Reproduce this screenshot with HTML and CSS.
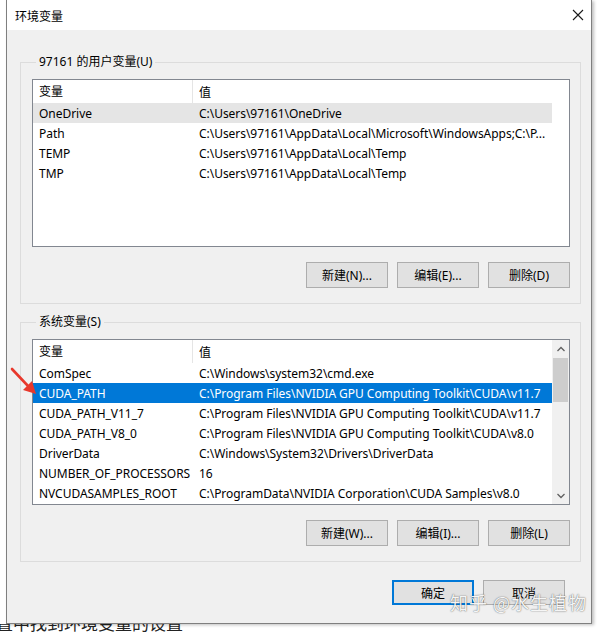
FILE: index.html
```html
<!DOCTYPE html>
<html lang="zh-CN">
<head>
<meta charset="utf-8">
<title>环境变量</title>
<link rel="stylesheet" href="styles.css">
</head>
<body>
<div class="page">
  <div class="window">
    <div class="titlebar">
      <span class="title">环境变量</span>
      <svg class="close" width="12" height="12" viewBox="0 0 12 12"><path d="M1 1L11 11M11 1L1 11" stroke="#1a1a1a" stroke-width="1.1" fill="none"/></svg>
    </div>
    <div class="content">
      <fieldset class="group group-user">
        <legend>97161 的用户变量(U)</legend>
        <div class="listview">
          <div class="row header"><span class="c1">变量</span><span class="c2">值</span></div>
          <div class="row sel-gray"><span class="c1">OneDrive</span><span class="c2">C:\Users\97161\OneDrive</span></div>
          <div class="row"><span class="c1">Path</span><span class="c2">C:\Users\97161\AppData\Local\Microsoft\WindowsApps;C:\P...</span></div>
          <div class="row"><span class="c1">TEMP</span><span class="c2">C:\Users\97161\AppData\Local\Temp</span></div>
          <div class="row"><span class="c1">TMP</span><span class="c2">C:\Users\97161\AppData\Local\Temp</span></div>
        </div>
        <div class="btnrow">
          <button class="btn">新建(N)...</button>
          <button class="btn">编辑(E)...</button>
          <button class="btn">删除(D)</button>
        </div>
      </fieldset>
      <fieldset class="group group-sys">
        <legend>系统变量(S)</legend>
        <div class="listview lv2">
          <div class="rows">
            <div class="row header"><span class="c1">变量</span><span class="c2">值</span></div>
            <div class="row"><span class="c1">ComSpec</span><span class="c2">C:\Windows\system32\cmd.exe</span></div>
            <div class="row sel-blue"><span class="c1">CUDA_PATH</span><span class="c2">C:\Program Files\NVIDIA GPU Computing Toolkit\CUDA\v11.7</span></div>
            <div class="row"><span class="c1">CUDA_PATH_V11_7</span><span class="c2">C:\Program Files\NVIDIA GPU Computing Toolkit\CUDA\v11.7</span></div>
            <div class="row"><span class="c1">CUDA_PATH_V8_0</span><span class="c2">C:\Program Files\NVIDIA GPU Computing Toolkit\CUDA\v8.0</span></div>
            <div class="row"><span class="c1">DriverData</span><span class="c2">C:\Windows\System32\Drivers\DriverData</span></div>
            <div class="row"><span class="c1">NUMBER_OF_PROCESSORS</span><span class="c2">16</span></div>
            <div class="row"><span class="c1">NVCUDASAMPLES_ROOT</span><span class="c2">C:\ProgramData\NVIDIA Corporation\CUDA Samples\v8.0</span></div>
          </div>
          <div class="scrollbar">
            <svg class="arrow" width="16" height="16" viewBox="0 0 16 16"><path d="M4.5 10L8 6.5L11.5 10" stroke="#606060" stroke-width="1.3" fill="none"/></svg>
            <div class="track"><div class="thumb"></div></div>
            <svg class="arrow" width="16" height="16" viewBox="0 0 16 16"><path d="M4.5 6L8 9.5L11.5 6" stroke="#606060" stroke-width="1.3" fill="none"/></svg>
          </div>
        </div>
        <div class="btnrow">
          <button class="btn">新建(W)...</button>
          <button class="btn">编辑(I)...</button>
          <button class="btn">删除(L)</button>
        </div>
      </fieldset>
      <div class="footer">
        <button class="btn default">确定</button>
        <button class="btn">取消</button>
      </div>
    </div>
    <div class="watermark">知乎 @水生植物</div>
  </div>
  <div class="below"><span>置中找到环境变量的设置</span></div>
  <svg class="redarrow" width="30" height="32" viewBox="0 0 30 32"><path d="M2 3L18 20" stroke="#e8382c" stroke-width="2.6" fill="none" stroke-linecap="round"/><path d="M26 28L13 24L22 15Z" fill="#e8382c"/></svg>
</div>
</body>
</html>
```

FILE: styles.css
```css
* { box-sizing: border-box; }
html, body { margin: 0; padding: 0; background: #ffffff; }
body {
  font-family: "Noto Sans", "Noto Sans CJK SC", sans-serif;
  font-size: 12px;
  color: #000;
}
.page {
  position: relative;
  width: 600px;
  height: 632px;
  overflow: hidden;
}
.window {
  position: relative;
  margin-left: 6px;
  width: 586px;
  height: 624px;
  border-left: 1px solid #7f7f7f;
  border-right: 1px solid #7f7f7f;
  border-bottom: 1px solid #7f7f7f;
  box-shadow: 2px 1px 3px rgba(0,0,0,0.25);
  background: #f0f0f0;
  display: flex;
  flex-direction: column;
}
.titlebar {
  height: 30px;
  background: #fff;
  display: flex;
  align-items: center;
  justify-content: space-between;
  padding: 0 7px 0 8px;
  flex: none;
}
.title { font-family: "Noto Sans CJK SC", sans-serif; font-size: 12px; color: #000; }
.content {
  flex: 1;
  background: #f0f0f0;
  padding: 24px 10px 0 13px;
  display: flex;
  flex-direction: column;
}
.group {
  margin: 0;
  border: 1px solid #dcdcdc;
  padding: 9px 10px 15px 11px;
  min-width: 0;
}
.group legend {
  padding: 0 3px;
  margin-left: 4px;
  line-height: 16px;
  font-size: 12px;
  color: #000;
}
.group-sys { margin-top: 10px; }
.listview {
  background: #fff;
  border: 1px solid #828790;
  height: 168px;
  overflow: hidden;
}
.lv2 { height: 166px; display: flex; }
.lv2 .rows { flex: 1; min-width: 0; }
.row {
  display: flex;
  height: 20px;
  align-items: center;
  white-space: nowrap;
  width: 519px;
  letter-spacing: -0.04px;
}
.row.header { height: 23px; }
.row.header .c1 { border-right: 1px solid #e5e5e5; height: 23px; line-height: 23px; }
.c1 { width: 160px; padding-left: 6px; flex: none; overflow: hidden; }
.c2 { padding-left: 6px; flex: 1; overflow: hidden; }
.sel-gray { background: #e5e5e5; }
.sel-blue { background: #0078d7; color: #fff; }
.scrollbar {
  width: 17px;
  flex: none;
  background: #f0f0f0;
  display: flex;
  flex-direction: column;
  align-items: center;
}
.arrow { flex: none; margin-top: 1px; }
.track { flex: 1; width: 17px; padding: 1px 1px; }
.thumb { width: 15px; height: 44px; background: #cdcdcd; }
.btnrow {
  display: flex;
  justify-content: flex-end;
  gap: 9px;
  margin-top: 15px;
}
.btn {
  font-family: "Noto Sans", "Noto Sans CJK SC", sans-serif;
  font-size: 12px;
  width: 82px;
  height: 26px;
  background: #e1e1e1;
  border: 1px solid #adadad;
  color: #000;
  padding: 0;
  margin: 0;
}
.btn.default { border: 2px solid #0078d7; }
.footer {
  display: flex;
  justify-content: flex-end;
  gap: 9px;
  margin-top: 18px;
  padding-right: 16px;
}
.footer .btn { height: 25px; }
.watermark {
  position: absolute;
  right: 4px;
  bottom: 8px;
  font-family: "Noto Sans CJK SC", sans-serif;
  font-size: 18px;
  color: rgba(255,255,255,0.95);
  text-shadow: 0 0 1px rgba(0,0,0,0.55), 0 0 2px rgba(0,0,0,0.25);
  letter-spacing: 1px;
}
.below {
  height: 8px;
  overflow: hidden;
}
.below span {
  display: block;
  margin-top: -10px;
  font-family: "Noto Sans CJK SC", sans-serif;
  font-size: 17px;
  line-height: 18px;
  color: #222;
  margin-left: -4px;
}
.redarrow {
  position: absolute;
  left: 10px;
  top: 366px;
}
```
